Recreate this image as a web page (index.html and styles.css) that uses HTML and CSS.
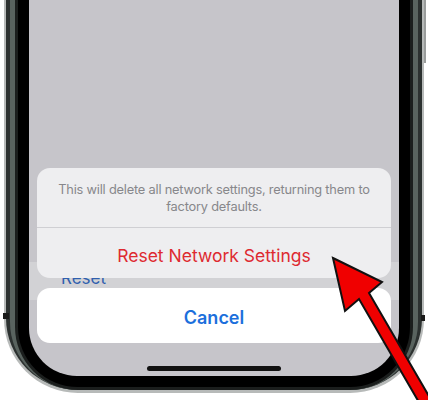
FILE: index.html
```html
<!DOCTYPE html>
<html lang="en">
<head>
  <meta charset="UTF-8">
  <title>Reset Network Settings</title>
  <link rel="stylesheet" href="styles.css">
</head>
<body>

  <!-- phone -->
  <div class="phone">
    <span class="nub nub-left"></span>
    <span class="nub nub-right"></span>
    <span class="side-key"></span>
    <div class="phone-edge">
      <div class="phone-band">
        <div class="phone-bezel">
          <div class="phone-glass">
            <div class="screen">

              <!-- settings list under the dim -->
              <div class="settings">
                <div class="row">Reset</div>
              </div>

              <!-- action sheet -->
              <div class="sheet">
                <div class="sheet-group">
                  <p class="sheet-msg">This will delete all network settings, returning them to factory defaults.</p>
                  <div class="sheet-btn danger">Reset Network Settings</div>
                </div>
                <div class="sheet-cancel">Cancel</div>
              </div>

              <div class="home-bar"></div>
            </div>
          </div>
        </div>
      </div>
    </div>
  </div>

  <!-- pointer -->
  <svg class="arrow" width="428" height="400" viewBox="0 0 428 400">
    <polygon points="333,258 382,282 369,293 441,417 431,423 359,299 345,311" fill="#f00000" stroke="#111" stroke-width="2" stroke-linejoin="miter"/>
  </svg>

</body>
</html>
```

FILE: styles.css
```css
* {
  margin: 0; padding: 0; box-sizing: border-box;
}

html, body {
  width: 100%; height: 100%;
}

body {
  position: relative;
  overflow: hidden;
  background: #fff;
  font-family: 'Inter', 'Roboto', sans-serif;
}

/* phone frame, top part runs off the page */
.phone {
  position: relative;
  width: 420px;
  margin: -80px 0 0 4px;
  padding: 2px 2px 3px;
  background: #b7bab9;
  border-radius: 74px;
}

.phone-edge {
  padding: 4px 4px 0;
  background: #2c3130;
  border-radius: 72px;
}

.phone-band {
  padding: 5px 5px 0;
  background: #59635f;
  border-radius: 68px;
}

.phone-bezel {
  padding: 3px;
  background: #1b1e1d;
  border-radius: 63px;
}

.phone-glass {
  padding: 11px;
  background: #000;
  border-radius: 60px;
}

.nub {
  position: absolute;
  width: 6px;
  height: 6px;
  background: #1a1a1a;
}

.nub-left { left: -1px; top: 393px; }
.nub-right { right: -1px; top: 395px; width: 4px; }

.side-key {
  position: absolute;
  right: -2px;
  top: 80px;
  width: 2px;
  height: 63px;
  background: #9a9d9c;
}

.screen {
  position: relative;
  height: 431px;
  background: #c6c5ca;
  border-radius: 48px;
  overflow: hidden;
  display: flex;
  flex-direction: column;
  justify-content: flex-end;
  padding-bottom: 5px;
}

.settings {
  position: absolute;
  left: 0; right: 0;
  top: 317px;
}

.row {
  height: 38px;
  padding: 6px 0 0 32px;
  background: #d2d2d5;
  color: #2f5fae;
  font-size: 17px;
}

.sheet {
  position: relative;
  z-index: 1;
  display: flex;
  flex-direction: column;
  gap: 10px;
  padding: 0 8px;
}

.sheet-group {
  background: #eeeef0;
  border-radius: 13px;
  overflow: hidden;
}

.sheet-msg {
  padding: 13px 12px 12px;
  border-bottom: 1px solid #cfcfd3;
  color: #87878b;
  font-size: 12.8px;
  line-height: 17px;
  letter-spacing: -0.2px;
  text-align: center;
}

.sheet-btn {
  height: 50px;
  display: flex;
  justify-content: center;
  align-items: center;
  padding-top: 4px;
  font-size: 17.5px;
}

.danger {
  color: #de2a30;
}

.sheet-cancel {
  height: 55px;
  display: flex;
  justify-content: center;
  align-items: center;
  padding-top: 3px;
  background: #fff;
  border-radius: 13px;
  color: #1c6fdc;
  font-size: 18px;
  font-weight: 600;
}

.home-bar {
  align-self: center;
  width: 134px;
  height: 5px;
  margin-top: 23px;
  background: #111;
  border-radius: 3px;
}

.arrow {
  position: absolute;
  z-index: 2;
  left: 0; top: 0;
}
```
